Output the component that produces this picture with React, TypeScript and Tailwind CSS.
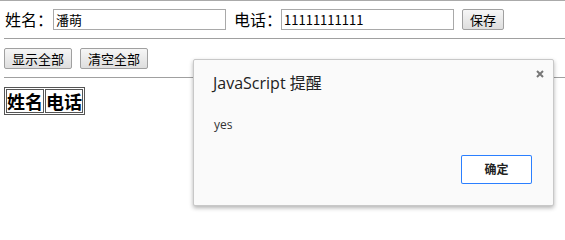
import React from "react";

const btn =
  "h-[21px] border border-[#a0a0a0] rounded-[2px] bg-gradient-to-b from-[#f6f6f6] to-[#dedede] px-[6px] text-[13px] leading-none text-black";

const App = () => {
  return (
    <div className="relative h-[223px] w-[565px] overflow-hidden border-t border-[#aaaaaa] bg-white font-['Noto_Sans_CJK_SC',sans-serif] text-black">
      <div className="flex h-[37px] items-center pl-[5px] pb-[1px] text-[16px]">
        <span>姓名：</span>
        <input
          readOnly
          value="潘萌"
          className="h-[21px] w-[173px] border border-[#a9a9a9] px-[2px] text-[13px] outline-none"
        />
        <span className="ml-[8px]">电话：</span>
        <input
          readOnly
          value="11111111111"
          className="ml-[-1px] h-[21px] w-[173px] border border-[#a9a9a9] px-[2px] text-[13px] outline-none"
        />
        <button className={`${btn} ml-[8px] w-[42px]`}>保存</button>
      </div>
      <div className="ml-[4px] border-t border-[#a0a0a0]" />
      <div className="flex h-[38px] items-center gap-[8px] pl-[4px]">
        <button className={`${btn} w-[68px]`}>显示全部</button>
        <button className={`${btn} w-[68px]`}>清空全部</button>
      </div>
      <div className="ml-[4px] border-t border-[#a0a0a0]" />
      <table className="ml-[4px] mt-[9px] border border-[#555] border-separate border-spacing-[1px]">
        <tbody>
          <tr>
            <td className="border border-[#555] p-0 text-[18px] font-bold leading-[22px]">姓名</td>
            <td className="border border-[#555] p-0 text-[18px] font-bold leading-[22px]">电话</td>
          </tr>
        </tbody>
      </table>

      <div className="absolute left-[193px] top-[58px] flex h-[147px] w-[361px] flex-col rounded-[2px] border border-[#c8c8c8] bg-[#fafafa] shadow-[0_2px_4px_rgba(0,0,0,0.3)] font-['Open_Sans','Noto_Sans_CJK_SC',sans-serif]">
        <svg
          className="absolute right-[9px] top-[10px]"
          width="8"
          height="8"
          viewBox="0 0 8 8"
        >
          <path d="M1 1L7 7M7 1L1 7" stroke="#777" strokeWidth="2" />
        </svg>
        <div className="pl-[19px] pt-[12px] text-[16px] leading-[22px] text-[#222]">JavaScript 提醒</div>
        <div className="pl-[20px] pt-[23px] text-[12px] leading-[16px] text-[#333]">yes</div>
        <div className="mt-auto flex justify-end pb-[21px] pr-[21px]">
          <div className="rounded-[2px] bg-blue-500 p-px">
            <button className="block h-[27px] w-[69px] rounded-[1px] bg-white text-[12px] font-bold text-[#222]">
              确定
            </button>
          </div>
        </div>
      </div>
    </div>
  );
};

export default App;
